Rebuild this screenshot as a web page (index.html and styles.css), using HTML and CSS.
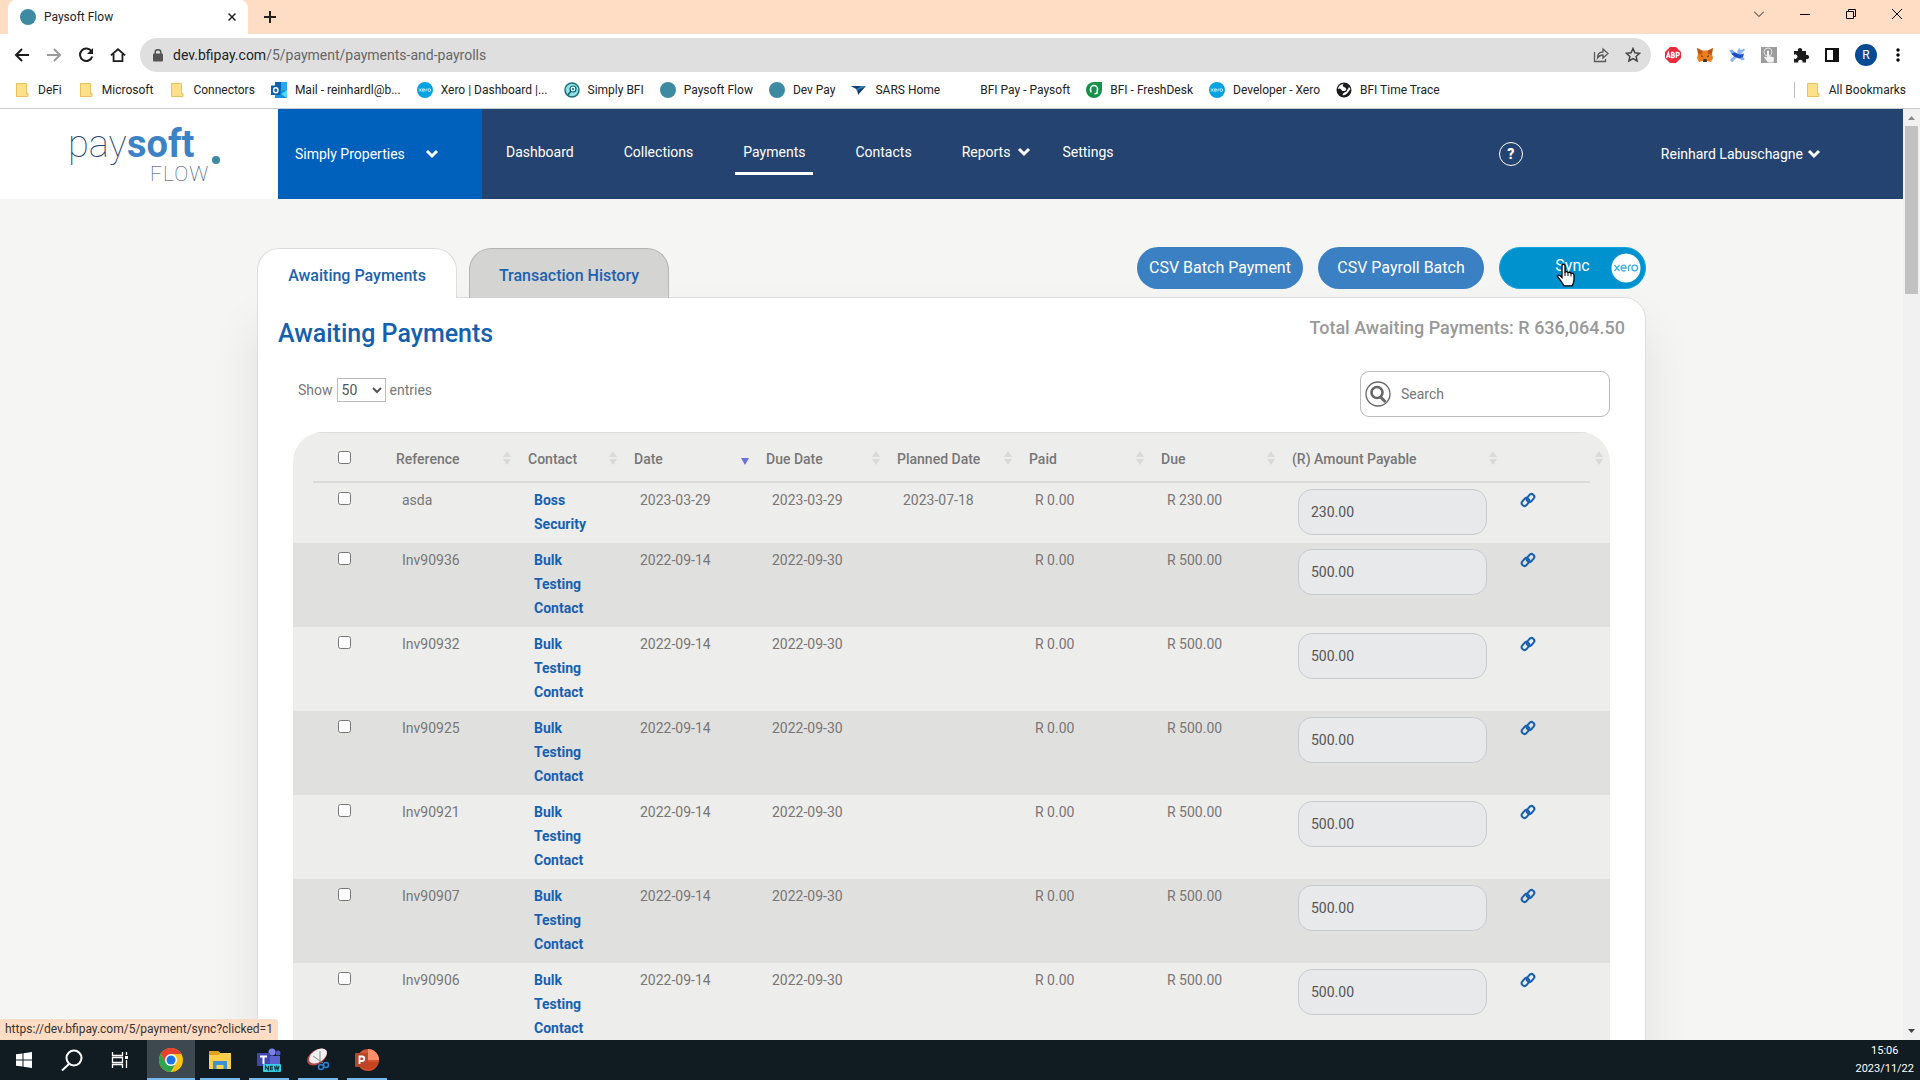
FILE: index.html
```html
<!DOCTYPE html>
<html lang="en">
<head>
<meta charset="utf-8">
<title>Paysoft Flow</title>
<link rel="stylesheet" href="styles.css">
</head>
<body>
<svg class="defs" aria-hidden="true">
  <symbol id="folder" viewBox="0 0 16 16"><path d="M2 1h10v10h2v4H2z" fill="#ffe08a"/><path d="M2.500 1.500h10v10h1.500v3h-11.500z" fill="none" stroke="#e6c35c"/></symbol>
  <symbol id="xero" viewBox="0 0 16 16"><circle cx="8" cy="8" r="8" fill="#00a3e0"/><g fill="none" stroke="#d8f3fd" stroke-width=".9"><path d="M2 6.500l2.400 3M4.400 6.500L2 9.500M5.200 8h2.600a1.300 1.400 0 1 0-.4 1.200M9 9.600V7.800q.1-1 1.200-1.100"/><circle cx="12.300" cy="8.100" r="1.400"/></g></symbol>
  <symbol id="dot" viewBox="0 0 16 16"><circle cx="8" cy="8" r="8" fill="#3d8ba3"/></symbol>
  <symbol id="chev" viewBox="0 0 14 10"><path d="M2 2l5 5 5-5" fill="none" stroke="currentColor" stroke-width="3"/></symbol>
  <symbol id="link" viewBox="0 0 16 16"><g fill="none" stroke="currentColor" stroke-width="2"><rect x="1.200" y="7.200" width="8.600" height="5.600" rx="2.800" transform="rotate(-50 5.500 10)"/><rect x="6.200" y="3.200" width="8.600" height="5.600" rx="2.800" transform="rotate(-50 10.500 6)"/></g></symbol>
  <symbol id="sort" viewBox="0 0 8 14"><path d="M4 0l4 6H0zM0 8h8l-4 6z" fill="#dadada"/></symbol>
</svg>

<header class="browser">
  <div class="tabstrip">
    <div class="browser-tab">
      <svg width="16" height="16"><use href="#dot"/></svg>
      <span>Paysoft Flow</span>
      <button class="plain" aria-label="Close tab"><svg width="8" height="8" viewBox="0 0 8 8"><path d="M.5.500l7 7M7.500.500l-7 7" stroke="#222" stroke-width="1.500"/></svg></button>
    </div>
    <button class="plain new-tab" aria-label="New tab"><svg width="12" height="12" viewBox="0 0 12 12"><path d="M6 0v12M0 6h12" stroke="#222" stroke-width="2"/></svg></button>
    <div class="window-controls">
      <button class="plain" aria-label="Tab search"><svg width="10" height="10" viewBox="0 0 10 10"><path d="M0 2.500l5 5 5-5" fill="none" stroke="#222"/></svg></button>
      <button class="plain" aria-label="Minimize"><svg width="10" height="10" viewBox="0 0 10 10"><path d="M0 5.500h10" stroke="#000"/></svg></button>
      <button class="plain" aria-label="Restore"><svg width="10" height="10" viewBox="0 0 10 10"><path d="M.5 2.500h7v7h-7zM2.500 2.500v-2h7v7h-2" fill="none" stroke="#000"/></svg></button>
      <button class="plain" aria-label="Close"><svg width="10" height="10" viewBox="0 0 10 10"><path d="M0 0l10 10M10 0L0 10" stroke="#000"/></svg></button>
    </div>
  </div>
  <div class="toolbar">
    <div class="nav-buttons">
      <button class="plain" aria-label="Back"><svg width="16" height="16" viewBox="0 0 16 16"><path d="M15 8H2M8 2L2 8l6 6" fill="none" stroke="#1c1c1c" stroke-width="2"/></svg></button>
      <button class="plain" aria-label="Forward"><svg width="16" height="16" viewBox="0 0 16 16"><path d="M1 8h13M8 2l6 6-6 6" fill="none" stroke="#9a9a9a" stroke-width="2"/></svg></button>
      <button class="plain" aria-label="Reload"><svg width="16" height="16" viewBox="0 0 16 16"><path d="M13.500 4.500A6.200 6.200 0 1 0 14.200 9.500" fill="none" stroke="#1c1c1c" stroke-width="2"/><path d="M15 1v6H9z" fill="#1c1c1c"/></svg></button>
      <button class="plain" aria-label="Home"><svg width="16" height="16" viewBox="0 0 18 16"><path d="M1 8.500L9 1.500l8 7M4 7v8h10V7" fill="none" stroke="#1c1c1c" stroke-width="2"/></svg></button>
    </div>
    <div class="omnibox">
      <svg width="10" height="13" viewBox="0 0 10 13"><rect y="4.500" width="10" height="8" rx="1" fill="#555"/><path d="M2.200 5V3a2.800 2.300 0 0 1 5.600 0v2" fill="none" stroke="#555" stroke-width="1.500"/></svg>
      <span class="url"><b>dev.bfipay.com</b>/5/payment/payments-and-payrolls</span>
      <svg width="16" height="16" viewBox="0 0 16 16"><path d="M1.500 5v9.500h11V12M4.500 11c0-4 2-6 5.500-6V2l5 4.500L10 11V8c-2.500 0-4 .8-5.500 3z" fill="none" stroke="#5a5a5a" stroke-width="1.300"/></svg>
      <svg width="16" height="16" viewBox="0 0 16 16"><path d="M8 1.500l1.900 4.300 4.700.5-3.500 3.100 1 4.600L8 11.600 3.900 14l1-4.600L1.400 6.300l4.700-.5z" fill="none" stroke="#444" stroke-width="1.500"/></svg>
    </div>
    <div class="extensions">
      <svg width="16" height="16" viewBox="0 0 16 16"><path d="M5 0h6l5 5v6l-5 5H5l-5-5V5z" fill="#ea2b3c"/><g fill="none" stroke="#fff" stroke-width="1.300"><path d="M1.500 11l1.800-5.500L5 11M2 9.300h2.700M6.500 5.500v5h1.600q1.300-.2 1.300-1.300T8 8H6.500h1.400q1.200-.2 1.200-1.200T8 5.500zM11.300 11V5.500h1.500a1.500 1.500 0 0 1 0 3h-1.500"/></g></svg>
      <svg width="16" height="16" viewBox="0 0 16 16"><path d="M0 1l5.500 2.500h5L16 1l-1 6 1 4-2 4-4-1-1 1H7l-1-1-4 1-2-4 1-4z" fill="#f07d1a"/><path d="M0 1l5.500 3L5 7l-3.500.5zM16 1l-5.500 3 .5 3 3.500.5z" fill="#b8591b"/><path d="M4 8l2.500 1.500-2 .5zM12 8L9.500 9.500l2 .5zM6.500 12h3l.5 3H6z" fill="#33383f"/></svg>
      <svg width="16" height="16" viewBox="0 0 16 16"><path d="M0 3.500l3-1 4 3.500-3 2zM16 12l-3 1.500-4-3 3-2z" fill="#7fa8f0"/><path d="M10 1l2 2 3-1.500 1 1.500-4 4-2 1-2-3zM6 8l3 2-3 2-2 3-2-.5-1-1.500z" fill="#8fb4f2"/><path d="M2 6.500l4-1 5 2 4-1-1 3.500-4 1.500L5 9.500z" fill="#1e50c8"/></svg>
      <svg width="16" height="16" viewBox="0 0 16 16"><rect width="16" height="16" fill="#9c9c9c"/><circle cx="7" cy="5" r="4" fill="none" stroke="#ddd"/><path d="M6 4q1.200-1 2 0v5l5 1.500-.5 5H7l-4-5 1-1 2 1z" fill="#f2f2f2"/></svg>
      <svg width="16" height="16" viewBox="0 0 16 16"><path d="M1 4h4a2.200 2.200 0 1 1 4 0h4v4a2.200 2.200 0 1 1 0 4v3.500H9.500a2.200 2.200 0 1 0-4.200 0H1V11.500a2.200 2.200 0 1 0 0-3.700z" fill="#1c1c1c"/></svg>
      <svg width="14" height="14" viewBox="0 0 14 14"><path d="M1 1h12v12H1z" fill="#fff" stroke="#111" stroke-width="2"/><path d="M8 1h5v12H8z" fill="#111"/></svg>
      <span class="avatar">R</span>
      <svg width="4" height="14" viewBox="0 0 4 14"><circle cx="2" cy="2" r="1.700"/><circle cx="2" cy="7" r="1.700"/><circle cx="2" cy="12" r="1.700"/></svg>
    </div>
  </div>
  <nav class="bookmarks" aria-label="Bookmarks">
    <a href="#"><svg><use href="#folder"/></svg>DeFi</a>
    <a href="#"><svg><use href="#folder"/></svg>Microsoft</a>
    <a href="#"><svg><use href="#folder"/></svg>Connectors</a>
    <a href="#"><svg viewBox="0 0 16 16"><path d="M4 0h12v16H4z" fill="#28a8ea"/><path d="M4 0h6v8H4z" fill="#0a64ad"/><path d="M4 9l12-1v8H4z" fill="#1490df"/><path d="M16 8v8l-6-4z" fill="#50d9ff"/><rect y="3.500" width="9.500" height="9.500" fill="#0f5cab"/><ellipse cx="4.800" cy="8.200" rx="2.200" ry="2.500" fill="none" stroke="#fff" stroke-width="1.400"/></svg>Mail - reinhardl@b...</a>
    <a href="#"><svg><use href="#xero"/></svg>Xero | Dashboard |...</a>
    <a href="#"><svg viewBox="0 0 16 16"><circle cx="8" cy="8" r="7" fill="#8fe3e6" stroke="#1f6f7c" stroke-width="1.500"/><circle cx="9" cy="7" r="3" fill="#d8ffff" stroke="#155f6d" stroke-width="1.200"/><path d="M7 9l-3 4" stroke="#155f6d" stroke-width="1.400"/><circle cx="9" cy="7" r="1" fill="#155f6d"/></svg>Simply BFI</a>
    <a href="#"><svg><use href="#dot"/></svg>Paysoft Flow</a>
    <a href="#"><svg><use href="#dot"/></svg>Dev Pay</a>
    <a href="#"><svg viewBox="0 0 16 16"><path d="M0 4h15l-5 3-3 5-2-5z" fill="#2d7eb5"/><path d="M0 4h10L6 7zM15 4L7 13V8z" fill="#173f72"/></svg>SARS Home</a>
    <a href="#"><svg></svg>BFI Pay - Paysoft</a>
    <a href="#"><svg viewBox="0 0 16 16"><path d="M8 0h8v8a8 8 0 1 1-8-8z" fill="#14924a"/><path d="M4.500 9V7a3.500 3.500 0 0 1 7 0v2M4.800 8v2.500M11.200 8v3L8.500 12" fill="none" stroke="#fff" stroke-width="1.500"/></svg>BFI - FreshDesk</a>
    <a href="#"><svg><use href="#xero"/></svg>Developer - Xero</a>
    <a href="#"><svg viewBox="0 0 16 16"><circle cx="8" cy="8" r="7.500" fill="#1c1c1c"/><path d="M8 1.500q-2 1-1 3l3 1.500q1 2-1 3H6.500L4 6.500 2 7q0-4 6-5.500zM13 5l1.500 2-3 4q-3 3-5 2l1-2 3-1.500z" fill="#fff"/></svg>BFI Time Trace</a>
    <a href="#" class="all"><svg><use href="#folder"/></svg>All Bookmarks</a>
  </nav>
</header>

<div class="viewport">
  <div class="page">
    <header class="site-header">
      <a class="logo" href="#" aria-label="Paysoft Flow">
        <svg width="128" height="64" viewBox="0 0 128 64"><text x="-2" y="34" class="logo-name thin">pay</text><text x="57" y="34" class="logo-name bold">soft</text><text x="80" y="58" class="logo-sub">FLOW</text><circle cx="146" cy="37" r="4" fill="#3d8ba3"/></svg>
      </a>
      <button class="company">Simply Properties <svg width="14" height="10"><use href="#chev"/></svg></button>
      <nav class="main-nav" aria-label="Main">
        <a href="#">Dashboard</a>
        <a href="#">Collections</a>
        <a href="#" class="current">Payments</a>
        <a href="#">Contacts</a>
        <a href="#" class="drop">Reports <svg width="14" height="10"><use href="#chev"/></svg></a>
        <a href="#">Settings</a>
      </nav>
      <button class="help" aria-label="Help"><span>?</span></button>
      <button class="user">Reinhard Labuschagne <svg width="14" height="10"><use href="#chev"/></svg></button>
    </header>
    <main class="content">
      <div class="top-row">
        <div class="tabs">
          <button class="tab active">Awaiting Payments</button>
          <button class="tab">Transaction History</button>
        </div>
        <div class="actions">
          <button class="action">CSV Batch Payment</button>
          <button class="action">CSV Payroll Batch</button>
          <button class="action sync">
            <span>Sync</span>
            <svg class="xero-badge" width="30" height="30" viewBox="0 0 30 30"><circle cx="15" cy="15" r="14.500" fill="#fff"/><g fill="none" stroke="#3eaede" stroke-width="1.300"><path d="M3.500 12l5 6M8.500 12l-5 6M10 15h5.200a2.600 2.900 0 1 0-.8 2.200M17.500 18v-3.500q.2-2.300 2.300-2.500"/><circle cx="23.700" cy="15" r="2.800"/></g></svg>
            <svg class="pointer" width="20" height="24" viewBox="0 0 20 24"><path d="M6 2q1.800-1.500 3 .3V9q2-1 3 .5 2-.8 3 .8 2.500-.5 3 1.500v5q0 3-2 6H8L5 18 1.500 13.500q.5-2 2.500-1L6 14.500z" fill="#fff" stroke="#000" stroke-width="1.300"/><path d="M9 9v4M12 9.500v3.500M15 10.500v3" stroke="#000"/></svg>
          </button>
        </div>
      </div>
      <section class="panel">
        <div class="panel-head">
          <h1>Awaiting Payments</h1>
          <p class="total">Total Awaiting Payments: R 636,064.50</p>
        </div>
        <div class="controls">
          <div class="length"><label for="entries">Show</label><select id="entries"><option>50</option></select><span>entries</span></div>
          <div class="search">
            <svg width="26" height="26" viewBox="0 0 26 26"><circle cx="13" cy="13" r="12" fill="none" stroke="#666" stroke-width="1.300"/><circle cx="12" cy="11.500" r="5.500" fill="none" stroke="#666" stroke-width="2.600"/><path d="M15.500 16l5 5" stroke="#666" stroke-width="3"/></svg>
            <input type="text" placeholder="Search" aria-label="Search">
          </div>
        </div>
        <table class="payments">
          <colgroup><col class="c-check"><col class="c-mid"><col class="c-narrow"><col class="c-mid"><col class="c-short"><col class="c-mid"><col class="c-mid"><col class="c-short"><col class="c-wide"><col class="c-narrow"></colgroup>
          <thead>
            <tr>
              <th><input type="checkbox" aria-label="Select all"></th>
              <th><div>Reference<svg><use href="#sort"/></svg></div></th>
              <th><div>Contact<svg><use href="#sort"/></svg></div></th>
              <th><div>Date<svg viewBox="0 0 8 14"><path d="M0 7h8l-4 7z" fill="#6b74d6"/></svg></div></th>
              <th><div>Due Date<svg><use href="#sort"/></svg></div></th>
              <th><div>Planned Date<svg><use href="#sort"/></svg></div></th>
              <th><div>Paid<svg><use href="#sort"/></svg></div></th>
              <th><div>Due<svg><use href="#sort"/></svg></div></th>
              <th><div>(R) Amount Payable<svg><use href="#sort"/></svg></div></th>
              <th><div><svg><use href="#sort"/></svg></div></th>
            </tr>
          </thead>
          <tbody>
            <tr><td><input type="checkbox" aria-label="Select asda"></td><td>asda</td><td><a href="#">Boss Security</a></td><td>2023-03-29</td><td>2023-03-29</td><td>2023-07-18</td><td>R 0.00</td><td>R 230.00</td><td><input class="amount" type="text" value="230.00" aria-label="Amount for asda"></td><td><a href="#" aria-label="Link"><svg><use href="#link"/></svg></a></td></tr>
            <tr><td><input type="checkbox" aria-label="Select Inv90936"></td><td>Inv90936</td><td><a href="#">Bulk Testing Contact</a></td><td>2022-09-14</td><td>2022-09-30</td><td></td><td>R 0.00</td><td>R 500.00</td><td><input class="amount" type="text" value="500.00" aria-label="Amount for Inv90936"></td><td><a href="#" aria-label="Link"><svg><use href="#link"/></svg></a></td></tr>
            <tr><td><input type="checkbox" aria-label="Select Inv90932"></td><td>Inv90932</td><td><a href="#">Bulk Testing Contact</a></td><td>2022-09-14</td><td>2022-09-30</td><td></td><td>R 0.00</td><td>R 500.00</td><td><input class="amount" type="text" value="500.00" aria-label="Amount for Inv90932"></td><td><a href="#" aria-label="Link"><svg><use href="#link"/></svg></a></td></tr>
            <tr><td><input type="checkbox" aria-label="Select Inv90925"></td><td>Inv90925</td><td><a href="#">Bulk Testing Contact</a></td><td>2022-09-14</td><td>2022-09-30</td><td></td><td>R 0.00</td><td>R 500.00</td><td><input class="amount" type="text" value="500.00" aria-label="Amount for Inv90925"></td><td><a href="#" aria-label="Link"><svg><use href="#link"/></svg></a></td></tr>
            <tr><td><input type="checkbox" aria-label="Select Inv90921"></td><td>Inv90921</td><td><a href="#">Bulk Testing Contact</a></td><td>2022-09-14</td><td>2022-09-30</td><td></td><td>R 0.00</td><td>R 500.00</td><td><input class="amount" type="text" value="500.00" aria-label="Amount for Inv90921"></td><td><a href="#" aria-label="Link"><svg><use href="#link"/></svg></a></td></tr>
            <tr><td><input type="checkbox" aria-label="Select Inv90907"></td><td>Inv90907</td><td><a href="#">Bulk Testing Contact</a></td><td>2022-09-14</td><td>2022-09-30</td><td></td><td>R 0.00</td><td>R 500.00</td><td><input class="amount" type="text" value="500.00" aria-label="Amount for Inv90907"></td><td><a href="#" aria-label="Link"><svg><use href="#link"/></svg></a></td></tr>
            <tr><td><input type="checkbox" aria-label="Select Inv90906"></td><td>Inv90906</td><td><a href="#">Bulk Testing Contact</a></td><td>2022-09-14</td><td>2022-09-30</td><td></td><td>R 0.00</td><td>R 500.00</td><td><input class="amount" type="text" value="500.00" aria-label="Amount for Inv90906"></td><td><a href="#" aria-label="Link"><svg><use href="#link"/></svg></a></td></tr>
          </tbody>
        </table>
      </section>
    </main>
  </div>
  <div class="scrollbar" aria-hidden="true">
    <svg width="17" height="17" viewBox="0 0 17 17"><path d="M5 11h7L8.500 7z" fill="#8a8a8a"/></svg>
    <div class="thumb"></div>
    <svg width="17" height="17" viewBox="0 0 17 17"><path d="M5 6h7l-3.500 4z" fill="#444"/></svg>
  </div>
  <div class="status">https://dev.bfipay.com/5/payment/sync?clicked=1</div>
</div>

<footer class="taskbar">
  <div class="system">
    <button class="plain" aria-label="Start"><svg width="16" height="16" viewBox="0 0 16 16"><path d="M0 2.300L6.500 1.400v6.100H0zM7.500 1.200L16 0v7.500H7.500zM0 8.500h6.500v6.100L0 13.700zM7.500 8.500H16V16l-8.500-1.200z" fill="#fff"/></svg></button>
    <button class="plain" aria-label="Search"><svg width="22" height="22" viewBox="0 0 22 22"><circle cx="13" cy="9" r="7.500" fill="none" stroke="#fff" stroke-width="2"/><path d="M8 15l-7 6.500" stroke="#fff" stroke-width="2"/></svg></button>
    <button class="plain" aria-label="Task view"><svg width="18" height="16" viewBox="0 0 18 16"><path d="M1.500 0v3.500h10V0M1.500 16v-3.500h10V16M1.500 5.500h10v5h-10zM15.500 0v3M15.500 8v8" fill="none" stroke="#fff" stroke-width="1.300"/><rect x="14" y="4" width="3" height="3" fill="#fff"/></svg></button>
  </div>
  <div class="apps">
    <button class="plain active" aria-label="Chrome"><svg width="24" height="24" viewBox="0 0 24 24"><circle cx="12" cy="12" r="12" fill="#fbc116"/><path d="M12 6h10.400A12 12 0 0 0 1.600 6L7 15z" fill="#e8402f"/><path d="M1.600 6a12 12 0 0 0 10 18L17 15l-5-1-5 1z" fill="#2da44e"/><circle cx="12" cy="12" r="6" fill="#fff"/><circle cx="12" cy="12" r="4.500" fill="#1a73e8"/></svg></button>
    <button class="plain" aria-label="File Explorer"><svg width="22" height="20" viewBox="0 0 22 20"><path d="M0 1h9l2 2h11v16H0z" fill="#ffcf4b"/><path d="M0 1h9l2 2-2 2H0z" fill="#e3a01e"/><path d="M4 19v-8h14v8h-3.500v-4h-7v4z" fill="#3b93d5"/></svg></button>
    <button class="plain" aria-label="Teams"><svg width="24" height="24" viewBox="0 0 24 24"><circle cx="15" cy="4" r="3.500" fill="#7b83eb"/><circle cx="21" cy="5" r="2.500" fill="#5059c9"/><path d="M10 8h13v9q-2 4-7 4t-6-4z" fill="#5b62d0"/><rect y="5" width="13" height="13" fill="#4048b0"/><path d="M3 8.500h7M6.500 8.500V16" stroke="#fff" stroke-width="2"/><rect x="6" y="16" width="18" height="8" rx="1" fill="#35d0e8"/><path d="M8.500 22v-4l3 4v-4M16 18.300h-2.500v3.400H16M13.500 20H16M17.500 18l1 4 1.200-3.500 1.200 3.500 1-4" fill="none" stroke="#06333d" stroke-width="1.100"/></svg></button>
    <button class="plain" aria-label="Snipping Tool"><svg width="24" height="24" viewBox="0 0 24 24"><ellipse cx="11" cy="9" rx="11" ry="7" transform="rotate(-35 11 9)" fill="#b74848"/><ellipse cx="12" cy="8" rx="10" ry="6" transform="rotate(-35 12 8)" fill="#f0f0f0"/><path d="M7 8l10 7M14 3v11" stroke="#888"/><circle cx="15" cy="19" r="2.500" fill="none" stroke="#2b83d3" stroke-width="1.500"/><circle cx="20" cy="17" r="2.500" fill="none" stroke="#2b83d3" stroke-width="1.500"/></svg></button>
    <button class="plain" aria-label="PowerPoint"><svg width="24" height="24" viewBox="0 0 24 24"><circle cx="13" cy="12" r="11" fill="#d35230"/><path d="M13 1a11 11 0 0 1 11 11H13z" fill="#ff8f6b"/><path d="M2.500 14h21A11 11 0 0 1 2.500 14z" fill="#c5431e"/><rect y="5" width="13" height="14" rx="1" fill="#b7472a"/><path d="M4.500 16V8.500h2.500a2.200 2.200 0 0 1 0 4.500H4.500" fill="none" stroke="#fff" stroke-width="1.800"/></svg></button>
  </div>
  <div class="clock"><span>15:06</span><span>2023/11/22</span></div>
</footer>
</body>
</html>
```
FILE: styles.css
```css
* { box-sizing: border-box; }
body {
  margin: 0;
  height: 100vh;
  display: flex;
  flex-direction: column;
  overflow: hidden;
  font-family: Roboto, sans-serif;
  font-size: 14px;
  color: #777;
  background: #fff;
}
svg { display: block; flex: none; }
.defs { position: absolute; width: 0; height: 0; }
button, input, select { font: inherit; color: inherit; }
button { border: 0; padding: 0; background: none; }
a { text-decoration: none; color: inherit; }
.plain { display: flex; align-items: center; justify-content: center; }

/* Browser frame */
.browser { flex: none; font-size: 12px; color: #222; border-bottom: 1px solid #c8cacd; }
.tabstrip { display: flex; align-items: stretch; height: 34px; padding-left: 8px; background: #ffdcc4; }
.browser-tab { display: flex; align-items: center; width: 240px; padding: 0 12px; gap: 8px; background: #fff; border-radius: 8px 8px 0 0; }
.browser-tab span { flex: 1; }
.new-tab { width: 44px; }
.window-controls { display: flex; margin-left: auto; }
.window-controls button { width: 46px; padding-bottom: 6px; }
.toolbar { display: flex; align-items: center; height: 42px; padding: 0 20px 0 14px; }
.nav-buttons { display: flex; gap: 16px; width: 126px; }
.omnibox { flex: 1; display: flex; align-items: center; gap: 16px; height: 34px; padding: 0 10px 0 13px; border-radius: 17px; background: #dfdfdf; font-size: 14px; }
.omnibox .url { flex: 1; color: #666; margin-left: -6px; }
.omnibox b { font-weight: 400; color: #222; }
.extensions { display: flex; align-items: center; gap: 16px; margin-left: 14px; }
.avatar { width: 22px; height: 22px; margin-right: 3px; border-radius: 50%; background: #084a94; color: #fff; text-align: center; line-height: 22px; }
.bookmarks { display: flex; align-items: center; height: 32px; gap: 16px; padding: 0 14px 4px; white-space: nowrap; }
.bookmarks a { display: flex; align-items: center; gap: 8px; }
.bookmarks svg { width: 16px; height: 16px; }
.bookmarks .all { margin-left: auto; padding-left: 10px; border-left: 1px solid #bbb; }

/* Page area */
.viewport { flex: 1; min-height: 0; display: flex; position: relative; overflow: hidden; }
.page { flex: 1; overflow: hidden; background: #f5f5f4; }
.scrollbar { width: 17px; display: flex; flex-direction: column; background: #f1f1f1; }
.thumb { width: 13px; height: 168px; margin: 0 auto auto; background: #c1c1c1; }
.status { position: absolute; left: 0; bottom: 0; min-width: 278px; padding: 0 5px; line-height: 21px; border-top-right-radius: 3px; background: #ffdcc4; color: #333; font-size: 12px; white-space: nowrap; }

.site-header { display: flex; height: 90px; background: #254370; color: #fff; }
.logo { width: 278px; padding: 14px 0 0 70px; background: #fff; }
.logo svg { overflow: visible; }
.logo-name { font-size: 38px; fill: #254370; }
.logo-name.thin { font-weight: 100; }
.logo-name.bold { font-weight: 700; fill: #3d82c4; }
.logo-sub { font-size: 21px; font-weight: 100; fill: #254370; letter-spacing: 1px; }
.company { display: flex; align-items: center; gap: 20px; width: 204px; padding-left: 17px; background: #0061bd; }
.main-nav { display: flex; align-items: flex-start; gap: 34px; padding: 28px 0 0 16px; }
.main-nav a { height: 38px; padding: 0 8px; line-height: 30px; }
.main-nav .current { border-bottom: 3px solid #fff; }
.main-nav .drop { display: flex; align-items: center; gap: 7px; height: 30px; padding-right: 0; margin-right: -11px; }
.help { margin-left: auto; width: 24px; }
.help span { display: block; height: 24px; border: 1px solid #fff; border-radius: 50%; line-height: 22px; font-weight: 900; }
.user { display: flex; align-items: center; gap: 4px; margin: 0 82px 0 138px; }

.content { max-width: 1389px; margin: 0 auto; padding-top: 48px; }
.top-row { display: flex; justify-content: space-between; align-items: flex-end; }
.tabs { display: flex; gap: 12px; }
.tab { width: 200px; height: 50px; margin-bottom: -1px; padding-top: 4px; border: 1px solid #b5b5b5; border-bottom: 0; border-radius: 22px 22px 0 0; background: #d4d4d3; color: #1c62b0; font-size: 16px; font-weight: 500; }
.tab.active { position: relative; background: #fff; border-color: #ddd; }
.actions { display: flex; gap: 15px; margin-bottom: 8px; }
.action { width: 166px; height: 42px; border-radius: 21px; background: #3b80c2; color: #fff; font-size: 16px; padding-bottom: 2px; }
.action.sync { position: relative; width: 147px; padding-bottom: 6px; border: 1px solid #12a5de; background: #0091cf; }
.xero-badge { position: absolute; right: 4px; top: 5px; }
.pointer { position: absolute; left: 56px; top: 15px; }

.panel { min-height: 1000px; padding: 12px 0 0; border: 1px solid #ddd; border-radius: 0 22px 0 0; background: #fff; box-shadow: 0 30px 50px rgba(0, 0, 0, .09); }
.panel-head { display: flex; justify-content: space-between; height: 61px; padding: 0 20px; }
h1 { margin: 0; font-size: 25px; line-height: 48px; font-weight: 500; color: #1360ae; }
.total { margin: 0; font-size: 18px; line-height: 36px; font-weight: 500; color: #999; }
.controls { display: flex; justify-content: space-between; height: 61px; padding: 0 35px 0 40px; }
.length { display: flex; align-items: center; gap: 4px; height: 24px; margin-top: 7px; }
.length select { width: 49px; height: 24px; border: 1px solid #bbb; background: #fff; color: #555; }
.search { display: flex; align-items: center; width: 250px; height: 46px; padding-left: 4px; gap: 10px; border: 1px solid #bbb; border-radius: 9px; }
.search input { flex: 1; min-width: 0; border: 0; outline: 0; background: none; padding: 0; }
.search input::placeholder { color: #777; }

.payments { width: calc(100% - 70px); margin: 0 35px; table-layout: fixed; border-collapse: separate; border-spacing: 0; border-radius: 30px 30px 0 0; overflow: hidden; background: #ededec; line-height: 24px; }
.c-check { width: 93px; }
.c-narrow { width: 106px; }
.c-mid { width: 132px; }
.c-short { width: 131px; }
.c-wide { width: 222px; }
th { height: 51px; padding: 1px 7px 0 10px; text-align: left; font-weight: 500; border-top: 1px solid #ddd; }
th div { display: flex; align-items: center; justify-content: space-between; white-space: nowrap; }
th svg { width: 8px; height: 14px; margin: 0 0 2px auto; }
thead tr { background: linear-gradient(#dadada, #dadada) center bottom / calc(100% - 40px) 2px no-repeat; }
td { padding: 5px 16px 7px; vertical-align: top; }
tbody tr:nth-child(even) { background: #e0e0df; }
td:first-child, th:first-child { padding-left: 45px; }
input[type="checkbox"] { display: block; width: 13px; height: 13px; margin: 4px 0 0; }
th input[type="checkbox"] { margin: 0 0 2px; }
td a { display: block; width: 56px; color: #1860b0; font-weight: 700; }
td a svg { width: 16px; height: 16px; margin-top: 4px; }
.amount { display: block; width: 189px; height: 46px; margin-top: 1px; padding: 0 12px; border: 1px solid #c8cbce; border-radius: 14px; background: #e7e9ea; color: #555; }

/* Taskbar */
.taskbar { flex: none; display: flex; height: 40px; background: #101b22; color: #fff; }
.system, .apps { display: flex; }
.system button { width: 48px; }
.apps { margin-left: 3px; gap: 1px; }
.apps button { width: 48px; background: linear-gradient(#76b9ed, #76b9ed) center bottom / 40px 2px no-repeat; }
.apps .active { background: linear-gradient(#76b9ed, #76b9ed) center bottom / 48px 2px no-repeat #3d4850; }
.clock { margin-left: auto; padding: 2px 6px 0 0; display: flex; flex-direction: column; align-items: center; font-size: 11px; line-height: 18px; }
```
